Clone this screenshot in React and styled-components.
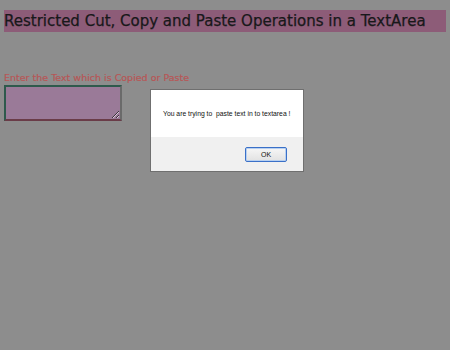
import styled, { createGlobalStyle } from 'styled-components';

const Global = createGlobalStyle`
  html, body {
    margin: 0;
    padding: 0;
    background: #8d8d8d;
  }
  #root {
    min-height: 350px;
  }
`;

const Page = styled.div`
  position: relative;
  width: 450px;
  height: 350px;
  padding: 10px 4px 0;
  box-sizing: border-box;
  background: #8d8d8d;
  overflow: hidden;
`;

const TitleBar = styled.h1`
  margin: 0;
  height: 22px;
  background: #8d5c78;
  color: #18181a;
  font-family: "Comic Sans MS", "DejaVu Sans", sans-serif;
  font-weight: normal;
  font-size: 15px;
  line-height: 22px;
  white-space: nowrap;
  -webkit-text-stroke: 0.25px #18181a;
`;

const Label = styled.div`
  margin-top: 39px;
  color: #b85656;
  font-family: "Comic Sans MS", "DejaVu Sans", sans-serif;
  font-size: 9.5px;
  line-height: 14px;
  -webkit-text-stroke: 0.2px #b85656;
`;

const Field = styled.textarea`
  display: block;
  margin: 0;
  width: 118px;
  height: 36px;
  box-sizing: border-box;
  background: #9a7a98;
  border: 2px solid;
  border-color: #2e5a4c #6a6a6a #6a3c48 #2e5a4c;
  resize: both;
  outline: none;
`;

const Dialog = styled.div`
  position: absolute;
  left: 150px;
  top: 89px;
  width: 154px;
  height: 83px;
  border: 1px solid #6f6f6f;
  box-sizing: border-box;
  background: #f0f0f0;
  display: flex;
  flex-direction: column;
  font-family: "Liberation Sans", Arial, sans-serif;
`;

const Message = styled.div`
  height: 47px;
  background: #ffffff;
  display: flex;
  align-items: center;
  padding-left: 12px;
  font-size: 6.8px;
  color: #111;
  white-space: pre;
`;

const Footer = styled.div`
  flex: 1;
  display: flex;
  justify-content: flex-end;
  align-items: center;
  padding-right: 16px;
`;

const OkButton = styled.button`
  width: 42px;
  height: 15px;
  padding: 0;
  border: 1px solid #3a70c8;
  border-radius: 2px;
  background: linear-gradient(#f6f6f6, #e2e2e2);
  font-family: "Liberation Sans", Arial, sans-serif;
  font-size: 7px;
  color: #111;
  box-shadow: inset 0 0 0 1px #b8d0f0;
`;

export default function App() {
  return (
    <>
      <Global />
      <Page>
        <TitleBar>Restricted Cut, Copy and Paste Operations in a TextArea</TitleBar>
        <Label>Enter the Text which is Copied or Paste</Label>
        <Field />
        <Dialog>
          <Message>You are trying to  paste text in to textarea !</Message>
          <Footer>
            <OkButton>OK</OkButton>
          </Footer>
        </Dialog>
      </Page>
    </>
  );
}
